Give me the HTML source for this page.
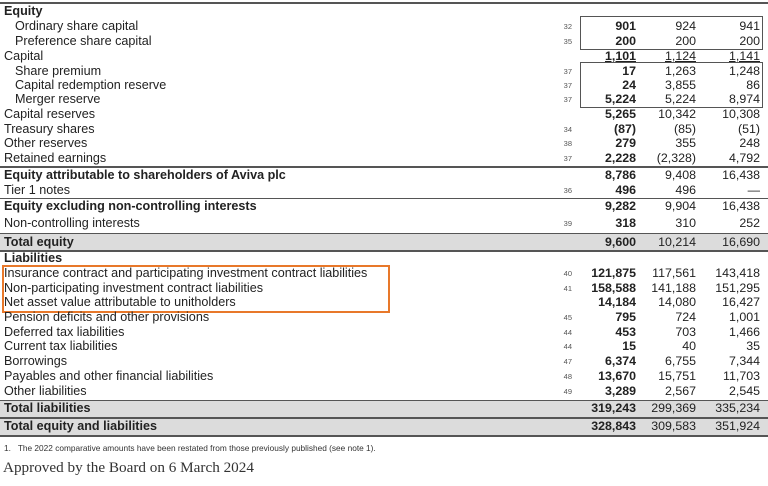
<!DOCTYPE html>
<html><head><meta charset="utf-8"><style>
body{margin:0;width:768px;height:486px;background:#fff;position:relative;overflow:hidden;font-family:"Liberation Sans",sans-serif;color:#222;}
.r{position:absolute;left:0;width:768px;height:15px;font-size:12.6px;line-height:15px;}
.l{position:absolute;left:4px;white-space:nowrap}
.i{left:15px}
.n{position:absolute;left:548px;width:24px;text-align:right;font-size:7.5px;color:#555}
.a,.b,.c{position:absolute;text-align:right;width:80px;font-size:12.4px}
.a{left:556px;font-weight:bold}
.b{left:616px}
.c{left:680px}
.B{font-weight:bold}
.u{text-decoration:underline}
.hl{position:absolute;left:0;width:768px;background:#555}
.g{position:absolute;left:0;width:768px;background:#dcdcdc}
.box{position:absolute;border:1px solid #555}
</style></head><body>
<div class="hl" style="top:2px;height:2px"></div>
<div class="box" style="left:580px;top:16px;width:181px;height:32px"></div>
<div class="box" style="left:580px;top:62px;width:181px;height:44px"></div>
<div class="hl" style="top:166px;height:2px"></div>
<div class="hl" style="top:198px;height:1px"></div>
<div class="g" style="top:234px;height:16px"></div>
<div class="hl" style="top:233px;height:1px"></div>
<div class="hl" style="top:250px;height:2px"></div>
<div class="g" style="top:401px;height:16px"></div>
<div class="g" style="top:419px;height:16px"></div>
<div class="hl" style="top:400px;height:1px"></div>
<div class="hl" style="top:417px;height:2px"></div>
<div class="hl" style="top:435px;height:2px"></div>
<div style="position:absolute;left:2px;top:265px;width:384px;height:44px;border:2px solid #e8782a"></div>

<div class="r" style="top:4px"><span class="l B">Equity</span></div>
<div class="r" style="top:19px"><span class="l i">Ordinary share capital</span><span class="n">32</span><span class="a">901</span><span class="b">924</span><span class="c">941</span></div>
<div class="r" style="top:34px"><span class="l i">Preference share capital</span><span class="n">35</span><span class="a">200</span><span class="b">200</span><span class="c">200</span></div>
<div class="r" style="top:49px"><span class="l">Capital</span><span class="a u">1,101</span><span class="b u">1,124</span><span class="c u">1,141</span></div>
<div class="r" style="top:64px"><span class="l i">Share premium</span><span class="n">37</span><span class="a">17</span><span class="b">1,263</span><span class="c">1,248</span></div>
<div class="r" style="top:78px"><span class="l i">Capital redemption reserve</span><span class="n">37</span><span class="a">24</span><span class="b">3,855</span><span class="c">86</span></div>
<div class="r" style="top:92px"><span class="l i">Merger reserve</span><span class="n">37</span><span class="a">5,224</span><span class="b">5,224</span><span class="c">8,974</span></div>
<div class="r" style="top:107px"><span class="l">Capital reserves</span><span class="a">5,265</span><span class="b">10,342</span><span class="c">10,308</span></div>
<div class="r" style="top:122px"><span class="l">Treasury shares</span><span class="n">34</span><span class="a">(87)</span><span class="b">(85)</span><span class="c">(51)</span></div>
<div class="r" style="top:136px"><span class="l">Other reserves</span><span class="n">38</span><span class="a">279</span><span class="b">355</span><span class="c">248</span></div>
<div class="r" style="top:151px"><span class="l">Retained earnings</span><span class="n">37</span><span class="a">2,228</span><span class="b">(2,328)</span><span class="c">4,792</span></div>
<div class="r" style="top:168px"><span class="l B">Equity attributable to shareholders of Aviva plc</span><span class="a">8,786</span><span class="b">9,408</span><span class="c">16,438</span></div>
<div class="r" style="top:183px"><span class="l">Tier 1 notes</span><span class="n">36</span><span class="a">496</span><span class="b">496</span><span class="c">—</span></div>
<div class="r" style="top:199px"><span class="l B">Equity excluding non-controlling interests</span><span class="a">9,282</span><span class="b">9,904</span><span class="c">16,438</span></div>
<div class="r" style="top:216px"><span class="l">Non-controlling interests</span><span class="n">39</span><span class="a">318</span><span class="b">310</span><span class="c">252</span></div>
<div class="r" style="top:235px"><span class="l B">Total equity</span><span class="a">9,600</span><span class="b">10,214</span><span class="c">16,690</span></div>
<div class="r" style="top:251px"><span class="l B">Liabilities</span></div>
<div class="r" style="top:266px"><span class="l">Insurance contract and participating investment contract liabilities</span><span class="n">40</span><span class="a">121,875</span><span class="b">117,561</span><span class="c">143,418</span></div>
<div class="r" style="top:281px"><span class="l">Non-participating investment contract liabilities</span><span class="n">41</span><span class="a">158,588</span><span class="b">141,188</span><span class="c">151,295</span></div>
<div class="r" style="top:295px"><span class="l">Net asset value attributable to unitholders</span><span class="a">14,184</span><span class="b">14,080</span><span class="c">16,427</span></div>
<div class="r" style="top:310px"><span class="l">Pension deficits and other provisions</span><span class="n">45</span><span class="a">795</span><span class="b">724</span><span class="c">1,001</span></div>
<div class="r" style="top:325px"><span class="l">Deferred tax liabilities</span><span class="n">44</span><span class="a">453</span><span class="b">703</span><span class="c">1,466</span></div>
<div class="r" style="top:339px"><span class="l">Current tax liabilities</span><span class="n">44</span><span class="a">15</span><span class="b">40</span><span class="c">35</span></div>
<div class="r" style="top:354px"><span class="l">Borrowings</span><span class="n">47</span><span class="a">6,374</span><span class="b">6,755</span><span class="c">7,344</span></div>
<div class="r" style="top:369px"><span class="l">Payables and other financial liabilities</span><span class="n">48</span><span class="a">13,670</span><span class="b">15,751</span><span class="c">11,703</span></div>
<div class="r" style="top:384px"><span class="l">Other liabilities</span><span class="n">49</span><span class="a">3,289</span><span class="b">2,567</span><span class="c">2,545</span></div>
<div class="r" style="top:401px"><span class="l B">Total liabilities</span><span class="a">319,243</span><span class="b">299,369</span><span class="c">335,234</span></div>
<div class="r" style="top:419px"><span class="l B">Total equity and liabilities</span><span class="a">328,843</span><span class="b">309,583</span><span class="c">351,924</span></div>
<div style="position:absolute;left:4px;top:443px;font-size:8.3px;color:#333;white-space:nowrap">1.&nbsp;&nbsp;&nbsp;The 2022 comparative amounts have been restated from those previously published (see note 1).</div>
<div style="position:absolute;left:3px;top:459px;font-size:15.2px;font-family:'Liberation Serif',serif;color:#333;white-space:nowrap">Approved by the Board on 6 March 2024</div>
</body></html>
